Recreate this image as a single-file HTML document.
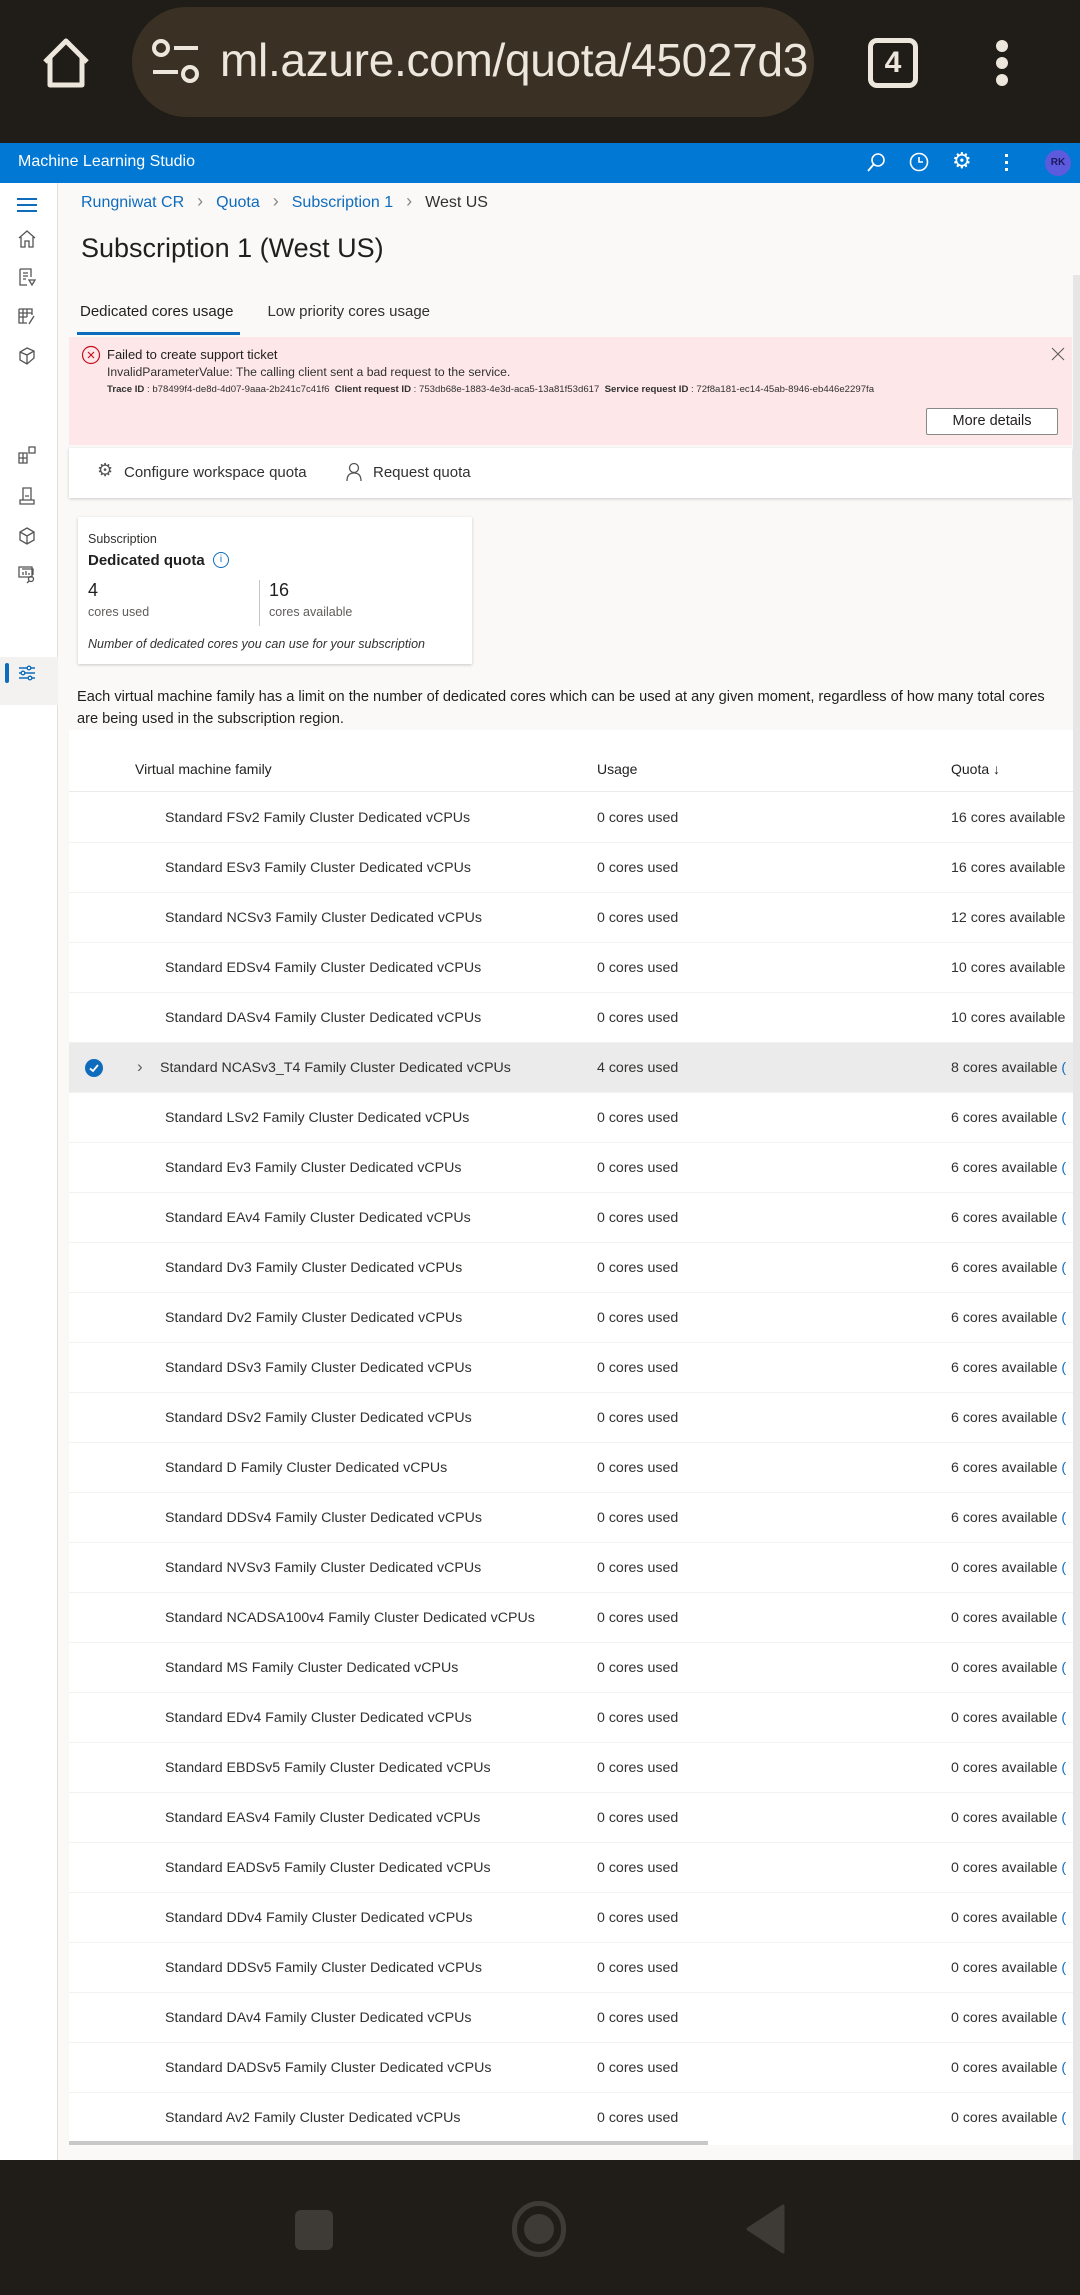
<!DOCTYPE html>
<html><head><meta charset="utf-8"><style>
*{box-sizing:border-box;margin:0;padding:0}
body{width:1080px;height:2295px;position:relative;overflow:hidden;background:#faf9f8;font-family:"Liberation Sans",sans-serif;color:#323130}
.abs{position:absolute}
#top{left:0;top:0;width:1080px;height:143px;background:#201d18}
#pill{left:132px;top:7px;width:682px;height:110px;border-radius:55px;background:#3a3124}
#url{left:220px;top:33px;font-size:46px;color:#ece6dc;white-space:nowrap;width:590px;overflow:hidden;letter-spacing:-0.3px}
#hdr{left:0;top:143px;width:1080px;height:40px;background:#0078d4;color:#fff}
#side{left:0;top:183px;width:58px;height:1977px;background:#fff;border-right:1px solid #e1dfdd}
.si{position:absolute;left:17px}
.bc{top:191px;left:81px;font-size:16px;white-space:nowrap}
.bc span.l{color:#0f6cbd}
.bc span.s{color:#8a8886;margin:0 13px;font-size:18px}
#title{left:81px;top:233px;font-size:27px;color:#201f1e}
#tabs{left:80px;top:303px;font-size:15px}
#err{left:69px;top:337px;width:1003px;height:108px;background:#fde7e9}
#cmd{left:69px;top:448px;width:1003px;height:50px;background:#fff;box-shadow:0 1px 3px rgba(0,0,0,.18);font-size:15px}
#card{left:78px;top:517px;width:394px;height:147px;background:#fff;box-shadow:0 1px 3px rgba(0,0,0,.2)}
#para{left:77px;top:686px;width:990px;font-size:14.6px;line-height:22px;color:#201f1e}
#tbl{left:69px;top:730px;width:1004px;height:1430px;background:#fff}
.row{position:absolute;left:0;width:1004px;height:50px;border-bottom:1px solid #f3f2f1;font-size:14.2px;color:#323130}
.row span{position:absolute;top:17px;white-space:nowrap}
.n{left:96px}.u{left:528px}.q{left:882px}
.q i{font-style:normal;color:#0f6cbd}
#nav{left:0;top:2160px;width:1080px;height:135px;background:#201d18}
</style></head><body>
<div id="top" class="abs"></div>
<svg class="abs" style="left:40px;top:36px" width="52" height="54" viewBox="0 0 52 54"><path d="M5 26 L26 5 L47 26 M10 21 V49 H42 V21" fill="none" stroke="#ece6dc" stroke-width="5" stroke-linejoin="round"/></svg>
<div id="pill" class="abs"></div>
<svg class="abs" style="left:150px;top:38px" width="52" height="48" viewBox="0 0 52 48"><circle cx="11" cy="10" r="7" fill="none" stroke="#ece6dc" stroke-width="4"/><line x1="24" y1="10" x2="48" y2="10" stroke="#ece6dc" stroke-width="4"/><line x1="3" y1="34" x2="28" y2="34" stroke="#ece6dc" stroke-width="4"/><circle cx="40" cy="36" r="7" fill="none" stroke="#ece6dc" stroke-width="4"/></svg>
<div id="url" class="abs">ml.azure.com/quota/45027d3</div>
<div class="abs" style="left:868px;top:38px;width:50px;height:50px;border:5px solid #ece6dc;border-radius:9px;color:#ece6dc;font-size:30px;font-weight:bold;text-align:center;line-height:40px">4</div>
<div class="abs" style="left:996px;top:40px;width:12px;height:12px;border-radius:6px;background:#ece6dc;box-shadow:0 17px 0 #ece6dc,0 34px 0 #ece6dc"></div>

<div id="hdr" class="abs"><div class="abs" style="left:18px;top:10px;font-size:16px">Machine Learning Studio</div>
<svg class="abs" style="left:865px;top:8px" width="22" height="22" viewBox="0 0 22 22"><circle cx="13" cy="9" r="6" fill="none" stroke="#fff" stroke-width="1.6"/><line x1="9" y1="13" x2="3" y2="20" stroke="#fff" stroke-width="1.8"/></svg>
<svg class="abs" style="left:908px;top:8px" width="22" height="22" viewBox="0 0 22 22"><circle cx="11" cy="11" r="8.5" fill="none" stroke="#fff" stroke-width="1.6"/><path d="M11 6V11H15" fill="none" stroke="#fff" stroke-width="1.6"/></svg>
<div class="abs" style="left:952px;top:5px;font-size:22px">⚙</div>
<div class="abs" style="left:1005px;top:11px;width:3px;height:3px;background:#fff;box-shadow:0 7px 0 #fff,0 14px 0 #fff"></div>
<div class="abs" style="left:1045px;top:7px;width:26px;height:26px;border-radius:13px;background:#5c5bde;color:#1b1a5e;font-size:10px;font-weight:bold;text-align:center;line-height:26px">RK</div></div>

<div id="side" class="abs">
<div class="si" style="top:15px;width:20px;height:2px;background:#0f6cbd;box-shadow:0 6px 0 #0f6cbd,0 12px 0 #0f6cbd"></div>
<svg class="si" style="top:46px" width="20" height="20" viewBox="0 0 20 20" fill="none" stroke="#555" stroke-width="1.3"><path d="M2 9L10 2L18 9M4 8V18H8V12H12V18H16V8"/></svg>
<svg class="si" style="top:84px" width="20" height="20" viewBox="0 0 20 20" fill="none" stroke="#555" stroke-width="1.3"><path d="M3 2H14V10M3 2V18H10M6 6H11M6 9H11M6 12H9M12 13H18L15 18Z"/></svg>
<svg class="si" style="top:123px" width="20" height="20" viewBox="0 0 20 20" fill="none" stroke="#555" stroke-width="1.3"><path d="M2 3H15V9M2 3V17H10M2 7H15M2 11H10M6 3V17M10 3V11M17 10L12 18"/></svg>
<svg class="si" style="top:163px" width="20" height="20" viewBox="0 0 20 20" fill="none" stroke="#555" stroke-width="1.3"><path d="M10 2L17 5V12L10 18L3 14V6ZM3 6L10 9L17 5M10 9V18"/></svg>
<svg class="si" style="top:262px" width="20" height="20" viewBox="0 0 20 20" fill="none" stroke="#555" stroke-width="1.3"><path d="M2 8H10V18H2ZM2 13H10M6 8V18M12 2H18V8H12Z"/></svg>
<svg class="si" style="top:303px" width="20" height="20" viewBox="0 0 20 20" fill="none" stroke="#555" stroke-width="1.3"><path d="M6 2H14V14H6ZM3 18H17V14H3ZM8 10H12"/></svg>
<svg class="si" style="top:343px" width="20" height="20" viewBox="0 0 20 20" fill="none" stroke="#555" stroke-width="1.3"><path d="M10 2L17 6V14L10 18L3 14V6ZM3 6L10 10L17 6M10 10V18"/></svg>
<svg class="si" style="top:381px" width="20" height="20" viewBox="0 0 20 20" fill="none" stroke="#555" stroke-width="1.3"><path d="M2 3H15V13H2ZM5 5H16V11M6 11V8M9 11V7M12 11V9"/><circle cx="14" cy="15" r="2.5"/><path d="M12 17L10 19"/></svg>
<div class="abs" style="left:0;top:474px;width:58px;height:48px;background:#f3f2f1"></div>
<div class="abs" style="left:5px;top:480px;width:4px;height:20px;border-radius:2px;background:#0f6cbd"></div>
<svg class="si" style="top:480px" width="20" height="20" viewBox="0 0 20 20" fill="none" stroke="#0f6cbd" stroke-width="1.4"><path d="M2 5H18M2 10H18M2 15H18"/><circle cx="12" cy="5" r="1.8" fill="#fff"/><circle cx="6" cy="10" r="1.8" fill="#fff"/><circle cx="13" cy="15" r="1.8" fill="#fff"/></svg>
</div>

<div class="abs bc"><span class="l">Rungniwat CR</span><span class="s">›</span><span class="l">Quota</span><span class="s">›</span><span class="l">Subscription 1</span><span class="s">›</span><span>West US</span></div>
<div id="title" class="abs">Subscription 1 (West US)</div>
<div id="tabs" class="abs"><span style="color:#201f1e">Dedicated cores usage</span><span style="margin-left:34px">Low priority cores usage</span></div>
<div class="abs" style="left:77px;top:332px;width:163px;height:3px;background:#0f6cbd"></div>

<div id="err" class="abs">
<svg class="abs" style="left:12px;top:8px" width="20" height="20" viewBox="0 0 20 20" fill="none" stroke="#c50f1f" stroke-width="1.2"><circle cx="10" cy="10" r="8.5"/><path d="M7 7L13 13M13 7L7 13"/></svg>
<div class="abs" style="left:38px;top:10px;font-size:13px;color:#201f1e">Failed to create support ticket</div>
<div class="abs" style="left:38px;top:28px;font-size:12.2px;color:#323130">InvalidParameterValue: The calling client sent a bad request to the service.</div>
<div class="abs" style="left:38px;top:47px;font-size:9.6px;color:#323130;white-space:nowrap"><b>Trace ID</b> : b78499f4-de8d-4d07-9aaa-2b241c7c41f6 &nbsp;<b>Client request ID</b> : 753db68e-1883-4e3d-aca5-13a81f53d617 &nbsp;<b>Service request ID</b> : 72f8a181-ec14-45ab-8946-eb446e2297fa</div>
<svg class="abs" style="left:982px;top:10px" width="14" height="14" viewBox="0 0 14 14"><path d="M1 1L13 13M13 1L1 13" stroke="#605e5c" stroke-width="1.1"/></svg>
<div class="abs" style="left:857px;top:71px;width:132px;height:27px;background:#fff;border:1px solid #8a8886;border-radius:2px;font-size:14.5px;text-align:center;line-height:25px;color:#201f1e">More details</div>
</div>

<div id="cmd" class="abs">
<div class="abs" style="left:28px;top:12px;font-size:18px;color:#555">⚙</div>
<div class="abs" style="left:55px;top:16px;color:#323130">Configure workspace quota</div>
<svg class="abs" style="left:276px;top:14px" width="18" height="20" viewBox="0 0 18 20" fill="none" stroke="#555" stroke-width="1.3"><circle cx="9" cy="6" r="4.5"/><path d="M2 19C2 13 5 11 9 11C13 11 16 13 16 19"/></svg>
<div class="abs" style="left:304px;top:16px;color:#323130">Request quota</div>
</div>

<div id="card" class="abs">
<div class="abs" style="left:10px;top:15px;font-size:12.5px">Subscription</div>
<div class="abs" style="left:10px;top:35px;font-size:15px;font-weight:bold;color:#201f1e">Dedicated quota</div>
<div class="abs" style="left:135px;top:35px;width:16px;height:16px;border:1px solid #0f6cbd;border-radius:8px;color:#0f6cbd;font-size:10px;text-align:center;line-height:14px">i</div>
<div class="abs" style="left:10px;top:63px;font-size:18px;color:#201f1e">4</div>
<div class="abs" style="left:10px;top:88px;font-size:12.5px;color:#605e5c">cores used</div>
<div class="abs" style="left:181px;top:63px;width:1px;height:46px;background:#c8c6c4"></div>
<div class="abs" style="left:191px;top:63px;font-size:18px;color:#201f1e">16</div>
<div class="abs" style="left:191px;top:88px;font-size:12.5px;color:#605e5c">cores available</div>
<div class="abs" style="left:10px;top:120px;font-size:12.5px;font-style:italic;color:#323130">Number of dedicated cores you can use for your subscription</div>
</div>

<div id="para" class="abs">Each virtual machine family has a limit on the number of dedicated cores which can be used at any given moment, regardless of how many total cores are being used in the subscription region.</div>

<div id="tbl" class="abs">
<div class="abs" style="left:0;top:0;width:1004px;height:62px;border-bottom:1px solid #edebe9;font-size:14px;color:#201f1e">
<span class="abs" style="left:66px;top:31px">Virtual machine family</span><span class="abs" style="left:528px;top:31px">Usage</span><span class="abs" style="left:882px;top:31px">Quota ↓</span></div>
<div class="row" style="top:63px"><span class="n">Standard FSv2 Family Cluster Dedicated vCPUs</span><span class="u">0 cores used</span><span class="q">16 cores available</span></div>
<div class="row" style="top:113px"><span class="n">Standard ESv3 Family Cluster Dedicated vCPUs</span><span class="u">0 cores used</span><span class="q">16 cores available</span></div>
<div class="row" style="top:163px"><span class="n">Standard NCSv3 Family Cluster Dedicated vCPUs</span><span class="u">0 cores used</span><span class="q">12 cores available</span></div>
<div class="row" style="top:213px"><span class="n">Standard EDSv4 Family Cluster Dedicated vCPUs</span><span class="u">0 cores used</span><span class="q">10 cores available</span></div>
<div class="row" style="top:263px"><span class="n">Standard DASv4 Family Cluster Dedicated vCPUs</span><span class="u">0 cores used</span><span class="q">10 cores available</span></div>
<div class="row" style="top:313px;background:#ebebeb"><svg class="abs" style="left:16px;top:16px" width="18" height="18" viewBox="0 0 18 18"><circle cx="9" cy="9" r="9" fill="#0f6cbd"/><path d="M5 9.5L8 12L13 6" fill="none" stroke="#fff" stroke-width="1.8"/></svg><span style="left:68px;top:14px;color:#605e5c;font-size:17px">›</span><span class="n" style="left:91px">Standard NCASv3_T4 Family Cluster Dedicated vCPUs</span><span class="u">4 cores used</span><span class="q">8 cores available <i>(</i></span></div>
<div class="row" style="top:363px"><span class="n">Standard LSv2 Family Cluster Dedicated vCPUs</span><span class="u">0 cores used</span><span class="q">6 cores available <i>(</i></span></div>
<div class="row" style="top:413px"><span class="n">Standard Ev3 Family Cluster Dedicated vCPUs</span><span class="u">0 cores used</span><span class="q">6 cores available <i>(</i></span></div>
<div class="row" style="top:463px"><span class="n">Standard EAv4 Family Cluster Dedicated vCPUs</span><span class="u">0 cores used</span><span class="q">6 cores available <i>(</i></span></div>
<div class="row" style="top:513px"><span class="n">Standard Dv3 Family Cluster Dedicated vCPUs</span><span class="u">0 cores used</span><span class="q">6 cores available <i>(</i></span></div>
<div class="row" style="top:563px"><span class="n">Standard Dv2 Family Cluster Dedicated vCPUs</span><span class="u">0 cores used</span><span class="q">6 cores available <i>(</i></span></div>
<div class="row" style="top:613px"><span class="n">Standard DSv3 Family Cluster Dedicated vCPUs</span><span class="u">0 cores used</span><span class="q">6 cores available <i>(</i></span></div>
<div class="row" style="top:663px"><span class="n">Standard DSv2 Family Cluster Dedicated vCPUs</span><span class="u">0 cores used</span><span class="q">6 cores available <i>(</i></span></div>
<div class="row" style="top:713px"><span class="n">Standard D Family Cluster Dedicated vCPUs</span><span class="u">0 cores used</span><span class="q">6 cores available <i>(</i></span></div>
<div class="row" style="top:763px"><span class="n">Standard DDSv4 Family Cluster Dedicated vCPUs</span><span class="u">0 cores used</span><span class="q">6 cores available <i>(</i></span></div>
<div class="row" style="top:813px"><span class="n">Standard NVSv3 Family Cluster Dedicated vCPUs</span><span class="u">0 cores used</span><span class="q">0 cores available <i>(</i></span></div>
<div class="row" style="top:863px"><span class="n">Standard NCADSA100v4 Family Cluster Dedicated vCPUs</span><span class="u">0 cores used</span><span class="q">0 cores available <i>(</i></span></div>
<div class="row" style="top:913px"><span class="n">Standard MS Family Cluster Dedicated vCPUs</span><span class="u">0 cores used</span><span class="q">0 cores available <i>(</i></span></div>
<div class="row" style="top:963px"><span class="n">Standard EDv4 Family Cluster Dedicated vCPUs</span><span class="u">0 cores used</span><span class="q">0 cores available <i>(</i></span></div>
<div class="row" style="top:1013px"><span class="n">Standard EBDSv5 Family Cluster Dedicated vCPUs</span><span class="u">0 cores used</span><span class="q">0 cores available <i>(</i></span></div>
<div class="row" style="top:1063px"><span class="n">Standard EASv4 Family Cluster Dedicated vCPUs</span><span class="u">0 cores used</span><span class="q">0 cores available <i>(</i></span></div>
<div class="row" style="top:1113px"><span class="n">Standard EADSv5 Family Cluster Dedicated vCPUs</span><span class="u">0 cores used</span><span class="q">0 cores available <i>(</i></span></div>
<div class="row" style="top:1163px"><span class="n">Standard DDv4 Family Cluster Dedicated vCPUs</span><span class="u">0 cores used</span><span class="q">0 cores available <i>(</i></span></div>
<div class="row" style="top:1213px"><span class="n">Standard DDSv5 Family Cluster Dedicated vCPUs</span><span class="u">0 cores used</span><span class="q">0 cores available <i>(</i></span></div>
<div class="row" style="top:1263px"><span class="n">Standard DAv4 Family Cluster Dedicated vCPUs</span><span class="u">0 cores used</span><span class="q">0 cores available <i>(</i></span></div>
<div class="row" style="top:1313px"><span class="n">Standard DADSv5 Family Cluster Dedicated vCPUs</span><span class="u">0 cores used</span><span class="q">0 cores available <i>(</i></span></div>
<div class="row" style="top:1363px;border:none"><span class="n">Standard Av2 Family Cluster Dedicated vCPUs</span><span class="u">0 cores used</span><span class="q">0 cores available <i>(</i></span></div>
<div class="abs" style="left:0;top:1411px;width:639px;height:4px;background:#c8c8c8"></div>
<div class="abs" style="left:0;top:1415px;width:1004px;height:15px;background:#faf9f8"></div>
</div>
<div class="abs" style="left:1073px;top:275px;width:7px;height:1885px;background:#e6e6e6"></div>

<div id="nav" class="abs">
<div class="abs" style="left:295px;top:50px;width:38px;height:40px;border-radius:6px;background:#3e3b37"></div>
<div class="abs" style="left:512px;top:41px;width:54px;height:56px;border-radius:28px;border:5px solid #3e3b37"></div>
<div class="abs" style="left:524px;top:54px;width:30px;height:30px;border-radius:15px;background:#3e3b37"></div>
<svg class="abs" style="left:745px;top:44px" width="40" height="50" viewBox="0 0 40 50"><path d="M38 2V48L3 25Z" fill="#3e3b37" stroke="#3e3b37" stroke-width="3" stroke-linejoin="round"/></svg>
</div>
</body></html>
